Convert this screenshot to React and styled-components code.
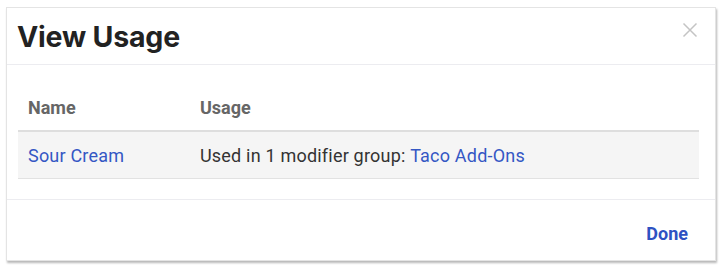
import React from "react"
import styled, { createGlobalStyle } from "styled-components"

const Global = createGlobalStyle`
	html, body {
		margin: 0;
		padding: 0;
		background: #ffffff;
	}
	body {
		font-family: Roboto, "Liberation Sans", sans-serif;
	}
`

const Page = styled.div`
	padding: 7px 6px 0 6px;
	width: 722px;
	height: 268px;
	box-sizing: border-box;
`

const Dialog = styled.div`
	width: 710px;
	height: 254px;
	box-sizing: border-box;
	background: #fff;
	border: 1px solid #e4e4e4;
	box-shadow: 1px 2px 2px rgba(0, 0, 0, 0.28);
	display: flex;
	flex-direction: column;
`

const Header = styled.div`
	height: 57px;
	box-sizing: border-box;
	border-bottom: 1px solid #ececf0;
	display: flex;
	align-items: center;
	justify-content: space-between;
	padding: 0 17px 0 10px;
`

const Title = styled.h1`
	margin: 0;
	font-family: Inter, "Noto Sans", sans-serif;
	font-weight: 700;
	font-size: 28.5px;
	letter-spacing: -0.2px;
	color: #222;
`

const Close = styled.button`
	border: none;
	background: none;
	padding: 0;
	width: 16px;
	height: 16px;
	display: flex;
	margin-top: -12px;
	cursor: pointer;
`

const Body = styled.div`
	padding: 32px 16px 20px 11px;
	border-bottom: 1px solid #ececf0;
`

const Table = styled.div`
	display: grid;
	grid-template-columns: 172px 1fr;
`

const HeadCell = styled.div`
	font-weight: 700;
	font-size: 18px;
	line-height: 21px;
	color: #666;
	padding: 0 10px 12px;
	border-bottom: 2px solid #dedede;
`

const Cell = styled.div`
	font-size: 18px;
	letter-spacing: 0.2px;
	color: #333;
	background: #f5f5f5;
	padding: 0 10px;
	height: 47px;
	box-sizing: border-box;
	display: flex;
	align-items: center;
	border-bottom: 1px solid #e2e2e2;
	white-space: pre;
`

const Link = styled.a`
	color: #3457c4;
	text-decoration: none;
`

const Footer = styled.div`
	flex: 1;
	display: flex;
	align-items: center;
	justify-content: flex-end;
	padding: 6px 27px 0 0;
`

const DoneButton = styled.button`
	border: none;
	background: none;
	padding: 0;
	font-family: Roboto, "Liberation Sans", sans-serif;
	font-weight: 700;
	font-size: 18px;
	color: #2e52c2;
	cursor: pointer;
`

export default function App() {
	return (
		<Page>
			<Global />
			<Dialog>
				<Header>
					<Title>View Usage</Title>
					<Close aria-label="Close">
						<svg width="16" height="16" viewBox="0 0 16 16">
							<path d="M1.5 1.5L14.5 14.5M14.5 1.5L1.5 14.5" stroke="#c4c4c4" strokeWidth="1.5" />
						</svg>
					</Close>
				</Header>
				<Body>
					<Table>
						<HeadCell>Name</HeadCell>
						<HeadCell>Usage</HeadCell>
						<Cell>
							<Link href="#">Sour Cream</Link>
						</Cell>
						<Cell>
							Used in 1 modifier group: <Link href="#">Taco Add-Ons</Link>
						</Cell>
					</Table>
				</Body>
				<Footer>
					<DoneButton>Done</DoneButton>
				</Footer>
			</Dialog>
		</Page>
	)
}
